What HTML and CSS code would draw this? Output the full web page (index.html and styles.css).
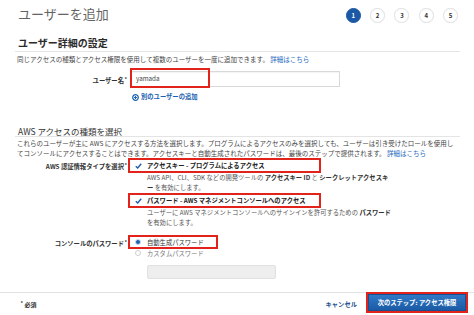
FILE: index.html
```html
<!DOCTYPE html>
<html lang="ja">
<head>
<meta charset="utf-8">
<title>ユーザーを追加</title>
<link rel="stylesheet" href="styles.css">
</head>
<body>
<div class="page">
  <header class="top">
    <h1 class="title">ユーザーを追加</h1>
    <ol class="steps">
      <li class="step active">1</li>
      <li class="step">2</li>
      <li class="step">3</li>
      <li class="step">4</li>
      <li class="step">5</li>
    </ol>
  </header>

  <section class="sec-top sec-first">
    <h2 class="sec-head">ユーザー詳細の設定</h2>
    <p class="desc">同じアクセスの種類とアクセス権限を使用して複数のユーザーを一度に追加できます。 <a class="link">詳細はこちら</a></p>
  </section>

  <div class="row row-user">
    <div class="lbl lbl-user">ユーザー名<span class="req">*</span></div>
    <div class="field">
      <div class="input-wrap">
        <div class="input">yamada</div>
        <span class="mark mark-user"></span>
      </div>
      <a class="add-user"><svg class="plus" width="7" height="7" viewBox="0 0 7 7"><circle cx="3.5" cy="3.5" r="2.8" fill="none" stroke="#1b62b3" stroke-width="1.2"/><path d="M3.5 2v3M2 3.5h3" stroke="#1b62b3" stroke-width="1"/></svg>別のユーザーの追加</a>
    </div>
  </div>

  <section class="sec-top sec-second">
    <h2 class="sec-head sec-head-light">AWS アクセスの種類を選択</h2>
    <p class="desc desc-2">これらのユーザーが主に AWS にアクセスする方法を選択します。プログラムによるアクセスのみを選択しても、ユーザーは引き受けたロールを使用し<br>てコンソールにアクセスすることはできます。アクセスキーと自動生成されたパスワードは、最後のステップで提供されます。 <a class="link">詳細はこちら</a></p>
  </section>

  <div class="row row-cred">
    <div class="lbl lbl-opt">AWS 認証情報タイプを選択<span class="req">*</span></div>
    <div class="field">
      <div class="opt mark-opt">
        <svg class="check" width="7" height="6" viewBox="0 0 7 6"><path d="M0.8 3.2 L2.7 5 L6.2 0.8" fill="none" stroke="#1d5ca8" stroke-width="1.4"/></svg>
        <span class="opt-title">アクセスキー - プログラムによるアクセス</span>
      </div>
      <p class="sub">AWS API、CLI、SDK などの開発ツールの <b>アクセスキー ID</b> と <b>シークレットアクセスキ</b><br><b>ー</b> を有効にします。</p>
      <div class="opt mark-opt mark-opt2">
        <svg class="check" width="7" height="6" viewBox="0 0 7 6"><path d="M0.8 3.2 L2.7 5 L6.2 0.8" fill="none" stroke="#1d5ca8" stroke-width="1.4"/></svg>
        <span class="opt-title">パスワード - AWS マネジメントコンソールへのアクセス</span>
      </div>
      <p class="sub">ユーザーに AWS マネジメントコンソールへのサインインを許可するための <b>パスワード</b><br>を有効にします。</p>
    </div>
  </div>

  <div class="row row-pwd">
    <div class="lbl lbl-opt">コンソールのパスワード<span class="req">*</span></div>
    <div class="field">
      <div class="opt mark-radio">
        <span class="radio on"></span>
        <span class="radio-text">自動生成パスワード</span>
      </div>
      <div class="opt-plain">
        <span class="radio"></span>
        <span class="radio-text muted">カスタムパスワード</span>
      </div>
      <div class="input-disabled"></div>
    </div>
  </div>

  <footer class="foot">
    <span class="required"><span class="req">*</span> 必須</span>
    <div class="actions">
      <a class="cancel">キャンセル</a>
      <span class="mark-btn"><span class="btn">次のステップ: アクセス権限</span></span>
    </div>
  </footer>
</div>
</body>
</html>
```

FILE: styles.css
```css
html, body {
  margin: 0;
  padding: 0;
  background: #ffffff;
}
body {
  width: 474px;
  height: 315px;
  overflow: hidden;
  font-family: "Noto Sans CJK JP", "Noto Sans", sans-serif;
  color: #333333;
}
.page {
  width: 474px;
  height: 315px;
  display: flex;
  flex-direction: column;
}

/* header */
.top {
  height: 30px;
  display: flex;
  align-items: center;
  justify-content: space-between;
  padding: 0 16px 0 18px;
  box-sizing: border-box;
}
.title {
  margin: 0;
  padding-bottom: 3px;
  font-size: 13px;
  line-height: 16px;
  font-weight: 400;
  color: #646464;
}
.steps {
  list-style: none;
  margin: 0;
  padding: 0;
  display: flex;
  gap: 9.3px;
}
.step {
  width: 15px;
  height: 15px;
  box-sizing: border-box;
  border-radius: 50%;
  border: 1px solid #e2e2e2;
  background: #ffffff;
  color: #333333;
  font-size: 6px;
  font-weight: 700;
  display: flex;
  align-items: center;
  justify-content: center;
  box-shadow: 0 0 1px rgba(0,0,0,0.08);
}
.step.active {
  background: #1b58a6;
  border-color: #1b58a6;
  color: #ffffff;
}

/* sections */
.sec-top {
  margin: 0 14px 0 15px;
}
.sec-first {
  margin-top: 6px;
}
.sec-second {
  margin-top: 24px;
}
.sec-head {
  margin: 0;
  padding: 0 0 1px 3px;
  font-size: 10px;
  line-height: 14px;
  font-weight: 700;
  color: #2b2b2b;
  border-bottom: 1px solid #e4e4e4;
}
.sec-head-light {
  font-size: 8.5px;
  line-height: 10px;
  padding-bottom: 0;
  font-weight: 400;
  color: #333333;
}
.desc {
  margin: 2px 0 0 2px;
  font-size: 6.5px;
  line-height: 10px;
  color: #444444;
  white-space: nowrap;
}
.desc-2 {
  margin-top: 1px;
}
.link {
  color: #1a68bd;
}
b {
  font-weight: 700;
  color: #333333;
}

/* rows */
.row {
  display: grid;
  grid-template-columns: 127px 1fr;
  column-gap: 1px;
}
.lbl {
  text-align: right;
  font-size: 6.3px;
  font-weight: 700;
  color: #333333;
  white-space: nowrap;
}
.req {
  font-size: 5px;
  vertical-align: 1.5px;
  margin-left: 0.5px;
}
.row-user {
  margin-top: 7px;
}
.lbl-user {
  line-height: 16px;
}
.field {
  display: flex;
  flex-direction: column;
  align-items: flex-start;
}
.input-wrap {
  position: relative;
  margin-left: 2px;
  width: 210px;
  height: 16px;
}
.input {
  width: 210px;
  height: 16px;
  box-sizing: border-box;
  border: 1px solid #d9d9d9;
  box-shadow: inset 0 1px 1px rgba(0,0,0,0.05);
  padding-left: 5px;
  font-size: 6.3px;
  line-height: 14px;
  color: #444444;
}
.mark {
  position: absolute;
  border: 2px solid #e2231c;
  box-sizing: border-box;
}
.mark-user {
  left: 0;
  top: -3px;
  width: 80px;
  height: 20px;
}
.add-user {
  margin: 5px 0 0 4px;
  display: flex;
  align-items: center;
  gap: 2px;
  font-size: 6.3px;
  line-height: 10px;
  font-weight: 700;
  color: #1b62b3;
}

/* credential options */
.row-cred {
  margin-top: 0;
}
.lbl-opt {
  line-height: 14px;
}
.opt {
  display: flex;
  align-items: center;
  box-sizing: border-box;
  height: 15px;
  border: 2px solid #e2231c;
  padding-left: 5px;
}
.mark-opt {
  width: 193px;
}
.check {
  width: 7px;
  margin-right: 5px;
  flex: none;
}
.opt-title {
  font-size: 6.3px;
  font-weight: 700;
  color: #222222;
  white-space: nowrap;
}
.sub {
  margin: 0 0 0 19px;
  font-size: 6.3px;
  line-height: 10px;
  color: #555555;
  white-space: nowrap;
}

/* password */
.row-pwd {
  margin-top: 7px;
}
.mark-radio {
  width: 90px;
  height: 14px;
}
.radio {
  width: 6px;
  height: 6px;
  box-sizing: border-box;
  border-radius: 50%;
  border: 1px solid #d0d0d0;
  background: #ffffff;
  margin-right: 6px;
  flex: none;
}
.radio.on {
  border: 1px solid #cfdcec;
  background: #1b5fb0;
}
.radio-text {
  font-size: 6.3px;
  color: #333333;
  white-space: nowrap;
}
.radio-text.muted {
  color: #777777;
}
.opt-plain {
  display: flex;
  align-items: center;
  height: 8px;
  padding-left: 7px;
}
.input-disabled {
  margin: 8px 0 0 19px;
  width: 129px;
  height: 14px;
  box-sizing: border-box;
  border: 1px solid #e0e0e0;
  border-radius: 2px;
  background: #eeeeee;
}

/* footer */
.foot {
  margin-top: 13px;
  border-top: 1px solid #e2e2e2;
  height: 23px;
  box-sizing: border-box;
  display: flex;
  justify-content: space-between;
  align-items: center;
  padding: 0 6px 0 20px;
}
.required {
  font-size: 6px;
  font-weight: 700;
  color: #333333;
}
.actions {
  display: flex;
  align-items: center;
  gap: 9px;
  height: 22px;
}
.cancel {
  font-size: 6.3px;
  font-weight: 700;
  color: #1f4f8f;
}
.mark-btn {
  align-self: flex-start;
  margin-top: -1px;
  border: 2px solid #e2231c;
  display: flex;
}
.btn {
  width: 98px;
  height: 17px;
  box-sizing: border-box;
  border: 1px solid #174f92;
  background: linear-gradient(#3079c6, #1b5aa5);
  color: #ffffff;
  font-size: 6.3px;
  font-weight: 700;
  display: flex;
  align-items: center;
  justify-content: center;
  white-space: nowrap;
}
```
